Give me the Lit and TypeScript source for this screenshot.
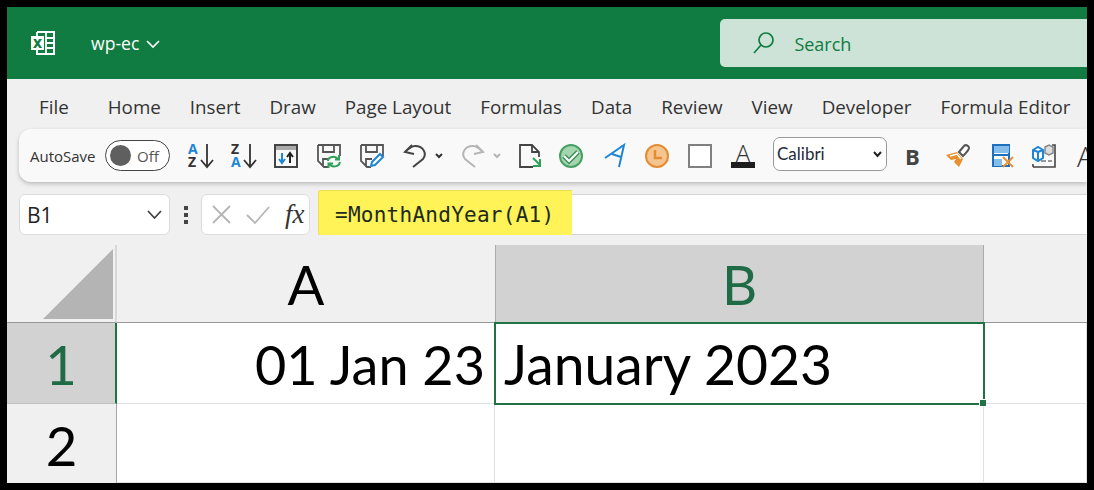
import { LitElement, html, css, svg } from "lit";
import { customElement } from "lit/decorators.js";

const ic = (content: unknown, w = 24, h = 24, cls = "") => html`<svg class="ic ${cls}" width=${w} height=${h} viewBox="0 0 ${w} ${h}" fill="none">${content}</svg>`;
const floppy = svg`<path d="M1 1H23V12M1 1V17L7 23H11M6 1V8H17V1M6 23V15H12" stroke="#555" stroke-width="1.8"/>`;

const icons = {
  az: ic(svg`<text x="0" y="10" class="t" fill="#1f86d6">A</text><text x="0" y="23" class="t" fill="#333">Z</text><path d="M19 0V22M13 16L19 23L25 16" stroke="#333" stroke-width="1.8"/>`),
  za: ic(svg`<text x="0" y="10" class="t" fill="#333">Z</text><text x="0" y="23" class="t" fill="#1f86d6">A</text><path d="M19 0V22M13 16L19 23L25 16" stroke="#333" stroke-width="1.8"/>`),
  win: ic(svg`<rect x="1" y="1" width="22" height="22" stroke="#444" stroke-width="2"/><rect x="2" y="2" width="20" height="4" fill="#aaa"/><path d="M8 9V19M5 15L8 19L11 15" stroke="#1f86d6" stroke-width="2"/><path d="M16 19V9M13 13L16 9L19 13" stroke="#222" stroke-width="2"/>`),
  sync: ic(svg`${floppy}<path d="M11 17C11 13 18 11 21 15M22 11V15.500H18M23 18C22 23 15 24 12.500 20M11.500 24V19.500H16" stroke="#2ea05a" stroke-width="2"/>`),
  pen: ic(svg`${floppy}<path d="M11 22L12 18L20 10L23 13L15 21Z" fill="#fff" stroke="#1f86d6" stroke-width="2"/>`),
  undo: ic(svg`<path d="M10 23L20 15C24 10 21 2 12 2C8 2 5 5 2 8M9 1L2 8L11 10" stroke="#444" stroke-width="2"/>`),
  redo: ic(svg`<path d="M14 23L4 15C0 10 3 2 12 2C16 2 19 5 22 8M15 1L22 8L13 10" stroke="#b5b5b5" stroke-width="2"/>`),
  doc: ic(svg`<path d="M14 23H1V1H13L20 8V13M13 1V8H20" stroke="#444" stroke-width="1.8"/><path d="M14 14L21 21M21 15V22H14" stroke="#2ea05a" stroke-width="2"/>`, 21),
  check: ic(svg`<circle cx="12" cy="12" r="11" fill="#a3d6ae" stroke="#46a063" stroke-width="2"/><path d="M5 12L10 17L19 8" stroke="#3f8f5a" stroke-width="5"/><path d="M5 12L10 17L19 8" stroke="#fff" stroke-width="2"/>`),
  a: ic(svg`<path d="M0 14L19 1L14 23M7 10L16 13" stroke="#1f86d6" stroke-width="2"/>`, 20, 24, "m3"),
  clock: ic(svg`<circle cx="12" cy="12" r="11" fill="#f6c48f" stroke="#e48c31" stroke-width="2"/><path d="M10 6V14H17" stroke="#e48c31" stroke-width="2.500"/>`, 24, 24, "m1"),
  square: ic(svg`<rect x="1" y="1" width="22" height="22" fill="#fff" stroke="#808080" stroke-width="2"/>`),
  brush: ic(svg`<path d="M0 11L11 8L17 15L13 23L8 18L10 15L5 16Z" fill="#ea8f2f"/><path d="M4 12L11 10L15 15" stroke="#fff" stroke-width="1.500"/><path d="M13 8L18 2C20 0 23 2 23 4C23 6 20 9 17 12Z" fill="#fff" stroke="#555" stroke-width="2"/>`, 25, 24, "m5"),
  clear: ic(svg`<rect x="1" y="1" width="16" height="21" fill="#fff" stroke="#1c6fbe" stroke-width="2"/><rect x="2" y="2" width="15" height="7" fill="#84bdea"/><rect x="2" y="15" width="8" height="7" fill="#84bdea"/><path d="M2 11H17" stroke="#1c6fbe" stroke-width="2"/><path d="M11 13L21 23M21 13L11 23" stroke="#e8913a" stroke-width="2"/>`, 22, 24, "m2"),
  cube: ic(svg`<path d="M1 23H23V1H20M1 20V23" stroke="#444" stroke-width="1.600"/><path d="M9 17H14M16 17H20" stroke="#777" stroke-width="1.500"/><path d="M13 3L17 1L21 3V9L17 11L13 9Z" fill="#ddd" stroke="#888" stroke-width="1.500"/><path d="M1 6L6 3L11 6V14L6 17L1 14Z" fill="#fff" stroke="#1f86d6" stroke-width="2"/><path d="M1 6L6 8V17M6 8L11 6" stroke="#1f86d6" stroke-width="2"/>`, 24, 24, "mn1"),
};

const chev = (w: number, h: number, color: string, sw = 2) => html`<svg class="ic" width=${w} height=${h} viewBox="0 0 ${w} ${h}" fill="none"><path d="M1 1L${w / 2} ${h - 1}L${w - 1} 1" stroke=${color} stroke-width=${sw}/></svg>`;

@customElement("app-root")
export class AppRoot extends LitElement {
  static styles = css`
    :host { display: block; width: 1094px; height: 490px; box-sizing: border-box; padding: 7px; background: #000; font-family: "Open Sans", sans-serif; }
    .ic { display: block; flex: none; overflow: visible; }
    .m1 { margin-left: 1px; } .m2 { margin-left: 2px; } .m3 { margin-left: 3px; } .m5 { margin-left: 5px; } .mn1 { margin-left: -1px; }
    .t { font: 700 14px "Open Sans", sans-serif; }
    .app { width: 1080px; height: 476px; overflow: hidden; background: #f0f0f0; display: flex; flex-direction: column; }

    .title { height: 72px; flex: none; background: #107c41; display: flex; align-items: center; padding-left: 24px; color: #fff; }
    .doc { margin-left: 36px; font-size: 17.6px; }
    .title .chevron { margin-left: 7px; margin-top: 1px; }
    .search { margin-left: 560px; flex: 1; height: 48px; background: #cde3d7; border-radius: 5px 0 0 5px; display: flex; align-items: center; padding-left: 33px; gap: 20px; color: #107c41; font-size: 18px; }
    .search span { padding-top: 1px; }

    .menu { height: 50px; flex: none; box-sizing: border-box; padding: 14px 0 0 32px; display: flex; gap: 29px; font-size: 18.8px; line-height: 28px; color: #333; white-space: nowrap; }
    .menu span { flex: none; }
    .menu span:first-child { margin-right: 10px; }

    .toolbar { height: 53px; flex: none; margin-left: 12px; background: #f9f9f9; border-radius: 12px 0 0 12px; box-shadow: 0 2px 4px rgba(0,0,0,.22); display: flex; align-items: center; padding-left: 11px; white-space: nowrap; overflow: hidden; }
    .autosave { font-size: 15px; color: #333; width: 75px; flex: none; }
    .toggle { width: 65px; height: 31px; box-sizing: border-box; flex: none; border: 1.5px solid #444; border-radius: 16px; display: flex; align-items: center; padding-left: 4px; gap: 6px; font-size: 15px; color: #555; background: #fff; margin-right: 18px; }
    .knob { width: 21px; height: 21px; border-radius: 50%; background: #5f5f5f; }
    .icons { display: flex; align-items: center; gap: 19px; flex: none; }
    .group { display: flex; align-items: center; gap: 8px; margin-right: -1px; }
    .underA { display: flex; flex-direction: column; align-items: center; width: 24px; font-size: 24px; line-height: 19px; font-weight: 300; color: #333; }
    .underA i { display: block; width: 24px; height: 6px; background: #1e1e1e; }
    .fontsel { width: 114px; height: 34px; box-sizing: border-box; border: 1px solid #999; border-radius: 7px; background: #fff; display: flex; align-items: center; justify-content: space-between; padding: 0 4px 0 3px; font: 17px Lato, sans-serif; color: #1d2b3c; margin: 0 0 4px -1px; }
    .bold { font-size: 22px; font-weight: 700; color: #444; width: 17px; margin-left: -1px; }
    .lastA { font-size: 28px; font-weight: 300; color: #333; margin-left: 2px; line-height: 24px; }

    .fx { height: 41px; flex: none; margin: 12px 0 0 12px; display: flex; align-items: stretch; }
    .namebox { width: 151px; box-sizing: border-box; background: #fff; border: 1px solid #dcdcdc; border-radius: 6px; display: flex; align-items: center; justify-content: space-between; padding: 0 7px 0 7px; font-size: 21px; color: #222; }
    .dots { width: 31px; display: flex; flex-direction: column; align-items: center; justify-content: center; gap: 3px; }
    .dots i { width: 4px; height: 4px; background: #444; display: block; }
    .btns { width: 109px; box-sizing: border-box; background: #fff; border: 1px solid #dcdcdc; border-radius: 6px; display: flex; align-items: center; padding: 0 0 0 10px; }
    .fxt { font: italic 27px "Liberation Serif", serif; color: #333; margin-left: 15px; }
    .check { margin-left: 15px; }
    .field { flex: 1; margin-left: 8px; background: #fff; border-top: 1px solid #d4d4d4; border-bottom: 1px solid #d4d4d4; display: flex; align-items: stretch; }
    .mark { width: 254px; margin-top: -5px; margin-bottom: -1px; box-sizing: border-box; background: #fff357; border-top: 1px solid #ece04f; border-left: 1px solid #ece04f; border-radius: 3px 0 0 3px; padding: 4px 0 0 16px; display: flex; align-items: center; font: 21px "DejaVu Sans Mono", monospace; letter-spacing: 0.26px; color: #1c2a1c; }

    .sheet { margin-top: 10px; flex: 1; display: grid; grid-template-columns: 110px 378px 489px 1fr; grid-template-rows: 78px 81px 1fr; background: #fff; font-family: Lato, sans-serif; font-size: 54.5px; color: #000; position: relative; }
    .sheet > div { box-sizing: border-box; }
    .corner { background: #f0f0f0; border-right: 2px solid #d8d8d8; border-bottom: 1px solid #999; display: flex; justify-content: flex-end; align-items: flex-end; padding: 0 2px 3px 0; }
    .ch { background: #f0f0f0; border-bottom: 1px solid #999; display: flex; align-items: center; justify-content: center; padding-top: 1px; }
    .ch.sel { background: #d2d2d2; color: #1f6b45; border-left: 1px solid #aaa; border-right: 1px solid #aaa; }
    .rh { background: #f0f0f0; border-right: 1px solid #a5a5a5; display: flex; align-items: center; justify-content: center; padding-top: 2px; }
    .rh.sel { background: #d2d2d2; color: #1f6b45; border-right: 2px solid #217346; border-bottom: 1px solid #c0c0c0; }
    .cell { border-bottom: 1px solid #e1e1e1; border-right: 1px solid #e1e1e1; display: flex; align-items: center; white-space: nowrap; padding-top: 2px; }
    .cell.right { justify-content: flex-end; padding-right: 9px; font-size: 54px; }
    .cell.active { outline: 2px solid #217346; outline-offset: -1px; padding-left: 9px; z-index: 1; position: relative; font-size: 55.2px; }
    .handle { position: absolute; right: -3px; bottom: -3px; width: 6px; height: 6px; background: #217346; border: 1px solid #fff; border-right: 0; border-bottom: 0; }
  `;

  render() {
    return html`<div class="app">
      <div class="title">
        <svg class="ic" width="24" height="24" viewBox="0 0 24 24" fill="none">
          <path d="M6 1H23V23H6V18" stroke="#fff" stroke-width="2"/>
          <path d="M15 1V23M15 7H23M15 12H23M15 17H23M6 1V5" stroke="#fff" stroke-width="1.800"/>
          <rect x="0" y="5" width="13" height="14" fill="#fff"/>
          <text x="2" y="16.500" font-family="Open Sans" font-weight="800" font-size="12.500" fill="#107c41">X</text>
        </svg>
        <span class="doc">wp-ec</span>
        <span class="chevron">${chev(14, 8, "#fff", 1.6)}</span>
        <div class="search">
          <svg class="ic" width="21" height="22" viewBox="0 0 21 22" fill="none"><circle cx="13" cy="8" r="7" stroke="#107c41" stroke-width="1.700"/><path d="M8 13L1 21" stroke="#107c41" stroke-width="1.700"/></svg>
          <span>Search</span>
        </div>
      </div>
      <div class="menu">
        ${["File", "Home", "Insert", "Draw", "Page Layout", "Formulas", "Data", "Review", "View", "Developer", "Formula Editor"].map((t) => html`<span>${t}</span>`)}
      </div>
      <div class="toolbar">
        <span class="autosave">AutoSave</span>
        <div class="toggle"><span class="knob"></span><span>Off</span></div>
        <div class="icons">
          ${icons.az}${icons.za}${icons.win}${icons.sync}${icons.pen}
          <div class="group">${icons.undo}${chev(8, 5, "#333")}</div>
          <div class="group">${icons.redo}${chev(8, 5, "#b5b5b5")}</div>
          ${icons.doc}${icons.check}${icons.a}${icons.clock}${icons.square}
          <div class="underA"><span>A</span><i></i></div>
          <div class="fontsel"><span>Calibri</span>${chev(9, 6, "#222")}</div>
          <span class="bold">B</span>
          ${icons.brush}${icons.clear}${icons.cube}
          <span class="lastA">A</span>
        </div>
      </div>
      <div class="fx">
        <div class="namebox"><span>B1</span>${chev(15, 9, "#444", 1.8)}</div>
        <div class="dots"><i></i><i></i><i></i></div>
        <div class="btns">
          <svg class="ic" width="19" height="19" viewBox="0 0 19 19" fill="none"><path d="M1 1L18 18M18 1L1 18" stroke="#b5b5b5" stroke-width="1.800"/></svg>
          <svg class="ic check" width="24" height="18" viewBox="0 0 24 18" fill="none"><path d="M1 9L9 17L23 1" stroke="#b5b5b5" stroke-width="1.800"/></svg>
          <span class="fxt">fx</span>
        </div>
        <div class="field"><div class="mark">=MonthAndYear(A1)</div></div>
      </div>
      <div class="sheet">
        <div class="corner"><svg class="ic" width="70" height="70" viewBox="0 0 70 70"><path d="M70 0V70H0Z" fill="#b4b4b4"/></svg></div>
        <div class="ch">A</div>
        <div class="ch sel">B</div>
        <div class="ch"></div>
        <div class="rh sel">1</div>
        <div class="cell right">01 Jan 23</div>
        <div class="cell active">January 2023<span class="handle"></span></div>
        <div class="cell"></div>
        <div class="rh">2</div>
        <div class="cell"></div>
        <div class="cell"></div>
        <div class="cell"></div>
      </div>
    </div>`;
  }
}
